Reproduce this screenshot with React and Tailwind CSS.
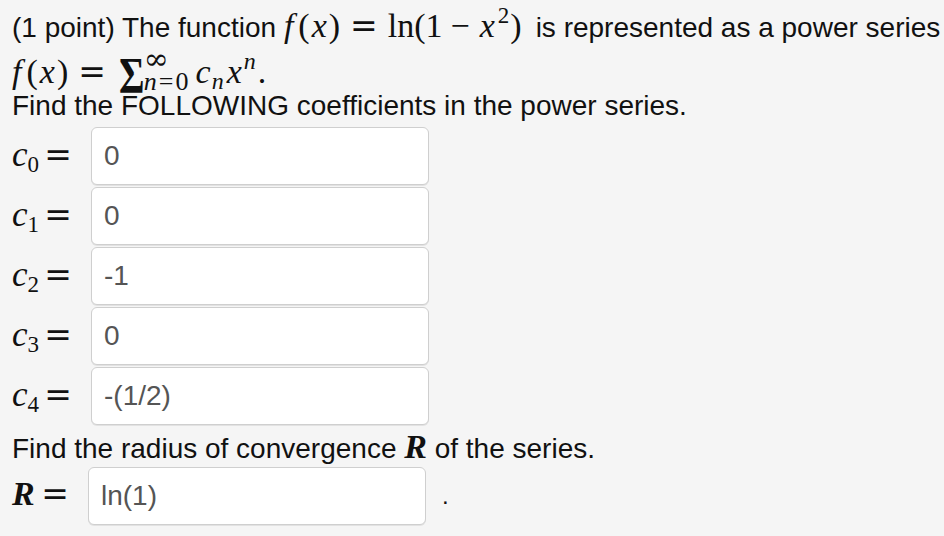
import React from "react";

const rows = [
  { n: "0", value: "0" },
  { n: "1", value: "0" },
  { n: "2", value: "-1" },
  { n: "3", value: "0" },
  { n: "4", value: "-(1/2)" },
];

// math text, roughly MathJax-sized next to the 28px body text
function M({ children, className = "" }) {
  return (
    <span className={"font-['Liberation_Serif',serif] text-[34px] " + className}>
      {children}
    </span>
  );
}

function Eq({ className = "" }) {
  return (
    <span className={"font-['DejaVu_Serif',serif] text-[33px] " + className}>=</span>
  );
}

// f(x) with TeX-like spacing
function Fx() {
  return (
    <>
      <i className="mr-[5px]">f</i>(<i className="mx-[2px]">x</i>)
    </>
  );
}

function AnswerBox({ value }) {
  return (
    <div className="h-[58px] w-[338px] shrink-0 rounded-[6px] border border-[#cfcfcf] bg-white px-[12px] flex items-center text-[28px] text-[#555] shadow-[0_1px_0_#e2e2e2]">
      {value}
    </div>
  );
}

export default function App() {
  return (
    <div className="h-[536px] w-[944px] overflow-hidden bg-[#f5f5f5] pl-[12px] pt-[6px] font-['Liberation_Sans',Arial,sans-serif] text-[28px] text-[#111]">
      <div className="h-[40px] leading-[40px] whitespace-nowrap">
        (1 point) The function{" "}
        <M>
          <Fx />
          <Eq className="mx-[10px]" />
          ln(1<span className="mx-[8px]">−</span>
          <i className="mx-[2px]">x</i>
          <sup className="text-[23px] top-[-14px] ml-[1px] mr-[1px]">2</sup>)
        </M>
        <span className="ml-[14px]">is represented as a power series</span>
      </div>
      <div className="h-[40px] leading-[40px] whitespace-nowrap flex items-baseline">
        <M>
          <Fx />
          <Eq className="mx-[10px]" />
        </M>
        <span className="inline-block ml-[3px] w-[25px] font-['Liberation_Serif',serif] text-[50px] leading-[40px] font-bold relative top-[9px] scale-x-[0.78] origin-left">
          Σ
        </span>
        <span className="inline-flex flex-col gap-[6px] leading-[18px] font-['Liberation_Serif',serif] text-[26px] relative top-[-14px]">
          <span className="font-['DejaVu_Serif',serif] text-[30px] leading-[16px]">∞</span>
          <span>
            <i>n</i>
            <span className="mx-[2px]">=</span>0
          </span>
        </span>
        <M className="ml-[7px]">
          <i>c</i>
          <sub className="text-[24px] bottom-[-6px] ml-[1px] mr-[3px]">
            <i>n</i>
          </sub>
          <i>x</i>
          <sup className="text-[24px] top-[-14px] ml-[2px] mr-[2px]">
            <i>n</i>
          </sup>
          .
        </M>
      </div>
      <div className="h-[40px] leading-[40px] whitespace-nowrap">
        Find the FOLLOWING coefficients in the power series.
      </div>

      <div className="mt-[1px] flex flex-col gap-[2px]">
        {rows.map((r) => (
          <div key={r.n} className="flex items-center">
            <div className="w-[79px] shrink-0 flex items-baseline font-['Liberation_Serif',serif] leading-none mt-[-4px]">
              <i className="text-[35px]">c</i>
              <span className="text-[23px] relative top-[6px]">{r.n}</span>
              <Eq className="ml-auto mr-[19px]" />
            </div>
            <AnswerBox value={r.value} />
          </div>
        ))}
      </div>

      <div className="mt-[2px] h-[40px] leading-[40px] whitespace-nowrap">
        Find the radius of convergence{" "}
        <M className="font-bold italic">R</M> of the series.
      </div>
      <div className="flex items-center">
        <div className="w-[76px] shrink-0 flex items-baseline font-['Liberation_Serif',serif] leading-none mt-[-4px]">
          <i className="font-bold text-[34px]">R</i>
          <Eq className="ml-auto mr-[19px]" />
        </div>
        <AnswerBox value="ln(1)" />
        <span className="ml-[16px] mt-[0px] text-[24px]">.</span>
      </div>
    </div>
  );
}
